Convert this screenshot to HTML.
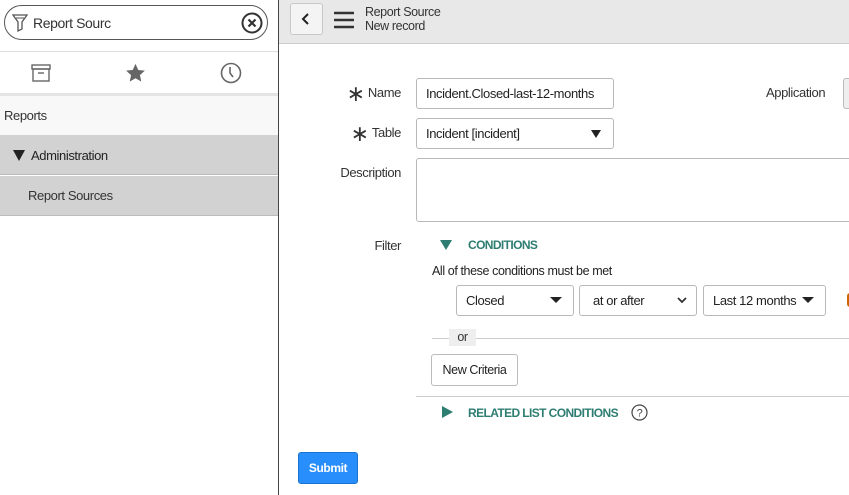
<!DOCTYPE html>
<html><head><meta charset="utf-8"><style>
*{box-sizing:border-box;margin:0;padding:0}
body{width:849px;height:495px;overflow:hidden;font-family:"Liberation Sans",sans-serif;font-size:13px;color:#333;background:#fff;position:relative;letter-spacing:-0.4px}
.a{position:absolute}
.inp{position:absolute;border:1px solid #b9b9b9;border-radius:3px;background:#fff;font-size:13px;color:#222;padding-left:9px;display:flex;align-items:center}
.lbl{position:absolute;font-size:13px;color:#333;text-align:right}
.tri{width:0;height:0;border-left:6px solid transparent;border-right:6px solid transparent;border-top:7px solid #222;position:absolute}
.teal{color:#2e7d72;font-weight:bold;font-size:12px;letter-spacing:-0.6px}
.ast{font-size:22px;position:relative;top:4px;line-height:10px}
</style></head><body>
<div class="a" style="left:0;top:0;width:278px;height:495px;background:#fff"></div>
<div class="a" style="left:4px;top:5px;width:264px;height:35px;border:1px solid #555;border-radius:18px"></div>
<svg class="a" style="left:12px;top:13px" width="16" height="20" viewBox="0 0 16 20"><path d="M1 2h14l-5 7v7l-4 2V9z" fill="none" stroke="#555" stroke-width="1.3"/><line x1="4" y1="5" x2="12" y2="5" stroke="#555"/></svg>
<div class="a" style="left:33px;top:15px;font-size:14px;color:#333">Report Sourc</div>
<svg class="a" style="left:241px;top:12px" width="22" height="22" viewBox="0 0 22 22"><circle cx="11" cy="11" r="9.5" fill="none" stroke="#333" stroke-width="2"/><path d="M7.5 7.5l7 7M14.5 7.5l-7 7" stroke="#333" stroke-width="2.2"/></svg>
<div class="a" style="left:0;top:51px;width:278px;height:1px;background:#ddd"></div>
<svg class="a" style="left:31px;top:64px" width="20" height="18" viewBox="0 0 20 18"><rect x="1" y="1" width="18" height="4" fill="none" stroke="#666" stroke-width="1.4"/><rect x="2" y="5" width="16" height="12" fill="none" stroke="#666" stroke-width="1.4"/><line x1="7" y1="9" x2="13" y2="9" stroke="#666" stroke-width="1.4"/></svg>
<svg class="a" style="left:125px;top:63px" width="21" height="20" viewBox="0 0 24 23"><path d="M12 1l3.2 7 7.6.8-5.7 5.1 1.6 7.5L12 17.6l-6.7 3.8 1.6-7.5L1.2 8.8 8.8 8z" fill="#666"/></svg>
<svg class="a" style="left:220px;top:62px" width="22" height="22" viewBox="0 0 22 22"><circle cx="11" cy="11" r="9.5" fill="none" stroke="#666" stroke-width="1.6"/><path d="M10 5v6l3 4" fill="none" stroke="#666" stroke-width="1.6"/></svg>
<div class="a" style="left:0;top:93px;width:278px;height:3px;background:#e4e4e4"></div>
<div class="a" style="left:0;top:96px;width:278px;height:39px;background:#f8f8f8"></div>
<div class="a" style="left:4px;top:108px;font-size:13px;color:#333">Reports</div>
<div class="a" style="left:0;top:135px;width:278px;height:40px;background:#d2d2d2;border-bottom:1px solid #bbb"></div>
<div class="tri" style="left:13px;top:150px;border-top-width:11px;border-left-width:6px;border-right-width:6px"></div>
<div class="a" style="left:31px;top:148px;font-size:13px;color:#222">Administration</div>
<div class="a" style="left:0;top:176px;width:278px;height:40px;background:#d2d2d2;border-bottom:1px solid #bbb"></div>
<div class="a" style="left:28px;top:188px;font-size:13px;color:#333">Report Sources</div>
<div class="a" style="left:278px;top:0;width:1px;height:495px;background:#444"></div>
<div class="a" style="left:279px;top:0;width:570px;height:44px;background:#e8e8e8;border-bottom:1px solid #ccc"></div>
<div class="a" style="left:290px;top:3px;width:33px;height:32px;border:1px solid #c8c8c8;border-radius:3px;background:#f4f4f4"></div>
<svg class="a" style="left:300px;top:12px" width="12" height="14" viewBox="0 0 12 14"><path d="M8 2L3 7l5 5" fill="none" stroke="#222" stroke-width="2"/></svg>
<svg class="a" style="left:333px;top:11px" width="22" height="18" viewBox="0 0 22 18"><path d="M1 2h20M1 9h20M1 16h20" stroke="#333" stroke-width="2.6"/></svg>
<div class="a" style="left:365px;top:5px;font-size:12.5px;color:#333;line-height:14px">Report Source<br>New record</div>
<div class="lbl" style="left:330px;top:85px;width:71px"><span class="ast">&#x2217;</span>&nbsp;Name</div>
<div class="inp" style="left:416px;top:78px;width:198px;height:31px">Incident.Closed-last-12-months</div>
<div class="lbl" style="left:330px;top:125px;width:71px"><span class="ast">&#x2217;</span>&nbsp;Table</div>
<div class="inp" style="left:416px;top:118px;width:198px;height:31px">Incident [incident]</div>
<div class="tri" style="left:591px;top:130px;border-left-width:5px;border-right-width:5px;border-top-width:8px"></div>
<div class="a" style="left:766px;top:85px;font-size:13px">Application</div>
<div class="a" style="left:843px;top:78px;width:10px;height:31px;border:1px solid #bbb;border-radius:3px;background:#eee"></div>
<div class="lbl" style="left:320px;top:165px;width:81px">Description</div>
<div class="a" style="left:416px;top:158px;width:440px;height:64px;border:1px solid #b9b9b9;border-radius:3px"></div>
<div class="lbl" style="left:340px;top:238px;width:61px">Filter</div>
<div class="tri" style="left:440px;top:240px;border-top-color:#2e7d72;border-top-width:10px"></div>
<div class="a teal" style="left:468px;top:238px">CONDITIONS</div>
<div class="a" style="left:432px;top:264px;font-size:12.5px;color:#222">All of these conditions must be met</div>
<div class="inp" style="left:456px;top:285px;width:118px;height:31px">Closed</div>
<div class="tri" style="left:550px;top:297px;border-left-width:6px;border-right-width:6px;border-top-width:6px"></div>
<div class="inp" style="left:579px;top:285px;width:118px;height:31px;padding-left:13px">at or after</div>
<svg class="a" style="left:677px;top:296px" width="10" height="8" viewBox="0 0 10 8"><path d="M1 2l4 4 4-4" fill="none" stroke="#333" stroke-width="1.8"/></svg>
<div class="inp" style="left:703px;top:285px;width:123px;height:31px">Last 12 months</div>
<div class="tri" style="left:802px;top:297px;border-left-width:6px;border-right-width:6px;border-top-width:6px"></div>
<div class="a" style="left:847px;top:293px;width:6px;height:14px;border-radius:7px;border:2px solid #c60"></div>
<div class="a" style="left:432px;top:338px;width:417px;height:1px;background:#ccc"></div>
<div class="a" style="left:449px;top:329px;width:27px;height:17px;background:#eee;font-size:12.5px;text-align:center;line-height:17px">or</div>
<div class="a" style="left:431px;top:354px;width:87px;height:32px;border:1px solid #bbb;border-radius:3px;font-size:12.5px;text-align:center;line-height:30px;color:#222">New Criteria</div>
<div class="a" style="left:416px;top:396px;width:433px;height:1px;background:#ccc"></div>
<div class="a" style="left:442px;top:406px;width:0;height:0;border-top:6px solid transparent;border-bottom:6px solid transparent;border-left:11px solid #2e7d72"></div>
<div class="a teal" style="left:468px;top:406px">RELATED LIST CONDITIONS</div>
<svg class="a" style="left:631px;top:404px" width="17" height="17" viewBox="0 0 17 17"><circle cx="8.5" cy="8.5" r="7.5" fill="none" stroke="#444" stroke-width="1.2"/><text x="8.5" y="12.5" font-size="11" text-anchor="middle" fill="#444" font-family="Liberation Sans">?</text></svg>
<div class="a" style="left:298px;top:452px;width:60px;height:32px;background:#278efc;border:1px solid #1a73d0;border-radius:3px;color:#fff;font-weight:bold;font-size:12px;text-align:center;line-height:30px">Submit</div>
</body></html>
